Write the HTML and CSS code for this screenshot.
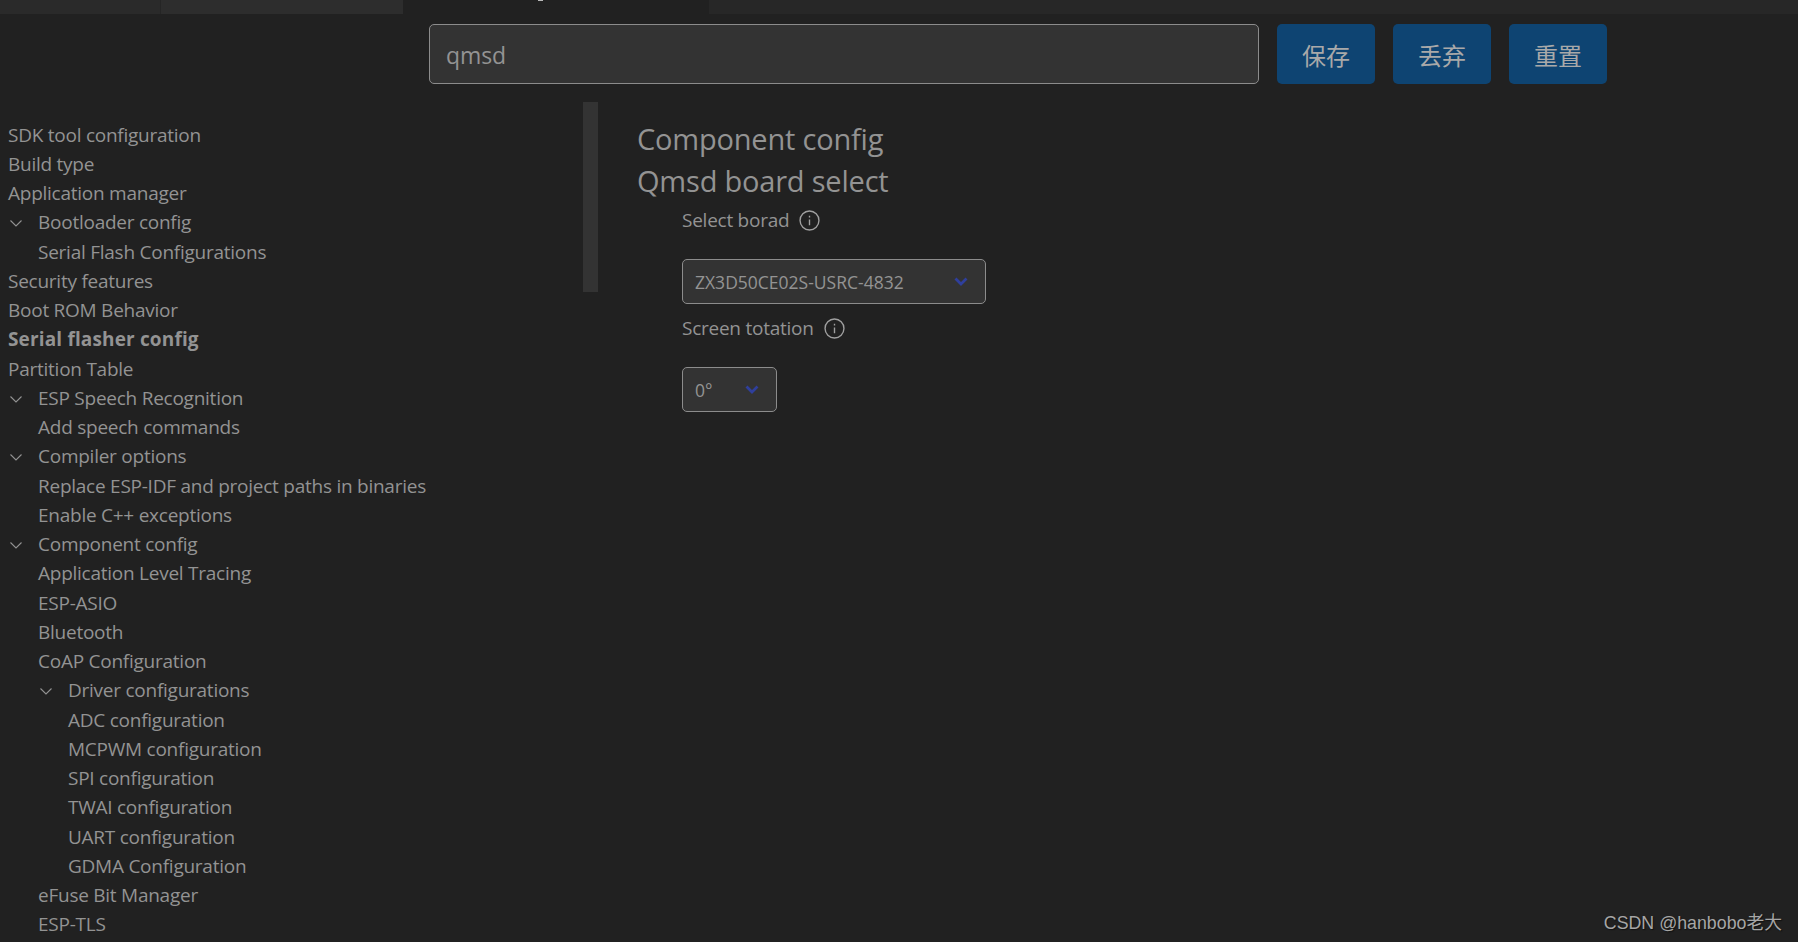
FILE: index.html
```html
<!DOCTYPE html>
<html lang="en">
<head>
    <meta charset="UTF-8">
    <title>SDK Configuration Editor</title>
    <link rel="stylesheet" href="styles.css">
</head>
<body>
  <div class="tabs">
    <div class="tab-a"></div>
    <div class="tab-b"></div>
    <div class="tab-active"><div class="tab-speck"></div></div>
  </div>
  <div class="search-row">
    <input class="search" type="text" value="qmsd">
    <button class="btn">保存</button>
    <button class="btn">丢弃</button>
    <button class="btn">重置</button>
  </div>
  <div class="main">
    <ul class="tree">
      <li class="row">SDK tool configuration</li>
      <li class="row">Build type</li>
      <li class="row">Application manager</li>
      <li class="row lvl1"><svg class="arrow" viewBox="0 0 16 16"><path d="M2.5 5.5 8 11l5.5-5.5"/></svg>Bootloader config</li>
      <li class="row lvl1">Serial Flash Configurations</li>
      <li class="row">Security features</li>
      <li class="row">Boot ROM Behavior</li>
      <li class="row current">Serial flasher config</li>
      <li class="row">Partition Table</li>
      <li class="row lvl1"><svg class="arrow" viewBox="0 0 16 16"><path d="M2.5 5.5 8 11l5.5-5.5"/></svg>ESP Speech Recognition</li>
      <li class="row lvl1">Add speech commands</li>
      <li class="row lvl1"><svg class="arrow" viewBox="0 0 16 16"><path d="M2.5 5.5 8 11l5.5-5.5"/></svg>Compiler options</li>
      <li class="row lvl1">Replace ESP-IDF and project paths in binaries</li>
      <li class="row lvl1">Enable C++ exceptions</li>
      <li class="row lvl1"><svg class="arrow" viewBox="0 0 16 16"><path d="M2.5 5.5 8 11l5.5-5.5"/></svg>Component config</li>
      <li class="row lvl1">Application Level Tracing</li>
      <li class="row lvl1">ESP-ASIO</li>
      <li class="row lvl1">Bluetooth</li>
      <li class="row lvl1">CoAP Configuration</li>
      <li class="row lvl2"><svg class="arrow" viewBox="0 0 16 16"><path d="M2.5 5.5 8 11l5.5-5.5"/></svg>Driver configurations</li>
      <li class="row lvl2">ADC configuration</li>
      <li class="row lvl2">MCPWM configuration</li>
      <li class="row lvl2">SPI configuration</li>
      <li class="row lvl2">TWAI configuration</li>
      <li class="row lvl2">UART configuration</li>
      <li class="row lvl2">GDMA Configuration</li>
      <li class="row lvl1">eFuse Bit Manager</li>
      <li class="row lvl1">ESP-TLS</li>
    </ul>
    <div class="scrollbar"></div>
    <div class="content">
      <h2>Component config</h2>
      <h2>Qmsd board select</h2>
      <div class="field">
        <div class="label">Select borad
          <svg class="info" viewBox="0 0 20 20"><circle cx="10" cy="10" r="9"/><path d="M10 9v5.5M10 5.4v1.8"/></svg>
        </div>
        <div class="select select-wide"><span>ZX3D50CE02S-USRC-4832</span>
          <svg class="caret" viewBox="0 0 14 10"><path d="M1.5 1.5 7 7l5.5-5.5"/></svg>
        </div>
      </div>
      <div class="field">
        <div class="label">Screen totation
          <svg class="info" viewBox="0 0 20 20"><circle cx="10" cy="10" r="9"/><path d="M10 9v5.5M10 5.4v1.8"/></svg>
        </div>
        <div class="select select-small"><span>0°</span>
          <svg class="caret" viewBox="0 0 14 10"><path d="M1.5 1.5 7 7l5.5-5.5"/></svg>
        </div>
      </div>
    </div>
  </div>
  <div class="watermark">CSDN @hanbobo老大</div>
</body>
</html>
```

FILE: styles.css
```css
html, body {
    height: 100%;
}
body {
    margin: 0;
    background-color: #212121;
    color: #939393;
    font-family: "Open Sans", "Noto Sans", "Noto Sans CJK SC", sans-serif;
    overflow: hidden;
    position: relative;
}
.tabs {
    display: flex;
    height: 14px;
    background-color: #272727;
}
.tab-a {
    width: 160px;
    background-color: #2a2a2a;
    border-right: 1px solid #252525;
}
.tab-b {
    width: 242px;
    background-color: #2d2d2d;
}
.tab-active {
    width: 306px;
    background-color: #212121;
}
.tab-speck {
    width: 5px;
    height: 1px;
    margin-left: 135px;
    background-color: #b9b9b9;
}
.search-row {
    display: flex;
    align-items: flex-start;
    gap: 18px;
    margin: 10px 0 0 429px;
}
.search {
    box-sizing: border-box;
    width: 830px;
    height: 60px;
    padding: 2px 16px 0;
    background-color: #333;
    border: 1px solid #8c8c8c;
    border-radius: 5px;
    color: #939393;
    font-family: inherit;
    font-size: 23px;
    letter-spacing: -0.1px;
    outline: none;
}
.btn {
    width: 98px;
    height: 60px;
    padding: 0;
    background-color: #0e4472;
    border: 0;
    border-radius: 5px;
    color: #a9a9a9;
    font-family: "Noto Sans CJK SC", sans-serif;
    font-size: 24px;
}
.main {
    display: flex;
    margin-top: 18px;
}
.tree {
    list-style: none;
    width: 583px;
    margin: 18.5px 0 0;
    padding: 0;
}
.row {
    position: relative;
    height: 29.26px;
    line-height: 29.26px;
    padding-left: 8px;
    font-size: 19px;
    letter-spacing: -0.25px;
    white-space: nowrap;
}
.lvl1 {
    padding-left: 38px;
}
.lvl2 {
    padding-left: 68px;
}
.current {
    font-weight: 700;
    letter-spacing: 0.15px;
}
.arrow {
    position: absolute;
    top: 7px;
    width: 16px;
    height: 16px;
    fill: none;
    stroke: #939393;
    stroke-width: 1.1;
}
.lvl1 .arrow {
    left: 8px;
}
.lvl2 .arrow {
    left: 38px;
}
.scrollbar {
    width: 15px;
    height: 190px;
    background-color: #333;
}
.content {
    padding: 16px 0 0 39px;
}
h2 {
    margin: 0;
    height: 42px;
    line-height: 42px;
    font-size: 29px;
    font-weight: 400;
    letter-spacing: -0.2px;
}
.field {
    margin-left: 45px;
}
.field:first-of-type {
    padding-top: 2px;
}
.label {
    display: flex;
    align-items: center;
    gap: 10px;
    height: 32px;
    font-size: 19px;
    letter-spacing: -0.25px;
}
.info {
    width: 21px;
    height: 21px;
    fill: none;
    stroke: #a0a0a0;
    stroke-width: 1.3;
}
.select {
    box-sizing: border-box;
    display: flex;
    align-items: center;
    justify-content: space-between;
    height: 45px;
    margin-top: 23px;
    margin-bottom: 8px;
    padding: 0 17px 0 12px;
    background-color: #333;
    border: 1px solid #8c8c8c;
    border-radius: 5px;
    font-size: 17.5px;
}
.select-wide {
    width: 304px;
}
.select-small {
    width: 95px;
}
.caret {
    width: 14px;
    height: 10px;
    fill: none;
    stroke: #2f3f9c;
    stroke-width: 2.8;
}
.watermark {
    position: absolute;
    right: 16px;
    bottom: 8px;
    font-family: "Liberation Sans", "Noto Sans CJK SC", sans-serif;
    font-size: 17.8px;
    color: #a6a6a6;
    text-shadow: 1px 1px 1px #111;
}
```
